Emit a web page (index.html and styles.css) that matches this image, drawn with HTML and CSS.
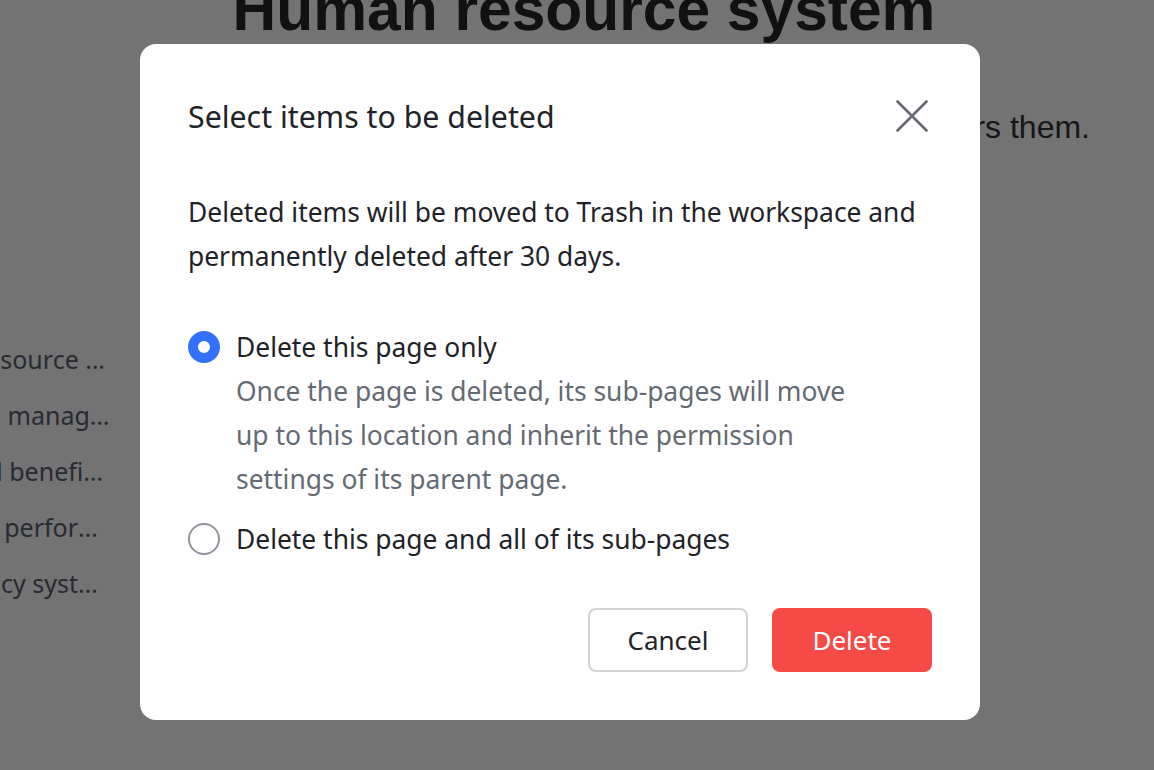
FILE: index.html
```html
<!DOCTYPE html>
<html lang="en">
<head>
<meta charset="utf-8">
<title>Human resource system</title>
<link rel="stylesheet" href="styles.css">
</head>
<body>
<div class="page">
  <aside class="sidebar">
    <ul class="nav">
      <li>Human resource management</li>
      <li>Personnel management</li>
      <li>Additional benefits plan</li>
      <li>Employee performance</li>
      <li>Leave policy system</li>
    </ul>
  </aside>
  <main class="content">
    <h1 class="doc-title">Human resource system</h1>
    <p class="doc-lead">Introduces the HR systems and how HR administers them.</p>
  </main>
</div>

<div class="overlay"></div>

<div class="modal" role="dialog" aria-labelledby="modal-title">
  <header class="modal-header">
    <h2 id="modal-title" class="modal-title">Select items to be deleted</h2>
    <button class="close-btn" aria-label="Close">
      <svg width="32" height="32" viewBox="0 0 32 32"><path d="M1.5 1.5 L30.5 30.5 M30.5 1.5 L1.5 30.5" stroke="#646a73" stroke-width="2.6" stroke-linecap="round" fill="none"/></svg>
    </button>
  </header>
  <p class="modal-text">Deleted items will be moved to Trash in the workspace and permanently deleted after 30 days.</p>
  <div class="options">
    <label class="option">
      <span class="radio checked"></span>
      <span class="option-body">
        <span class="option-label">Delete this page only</span>
        <span class="option-desc">Once the page is deleted, its sub-pages will move up to this location and inherit the permission settings of its parent page.</span>
      </span>
    </label>
    <label class="option">
      <span class="radio"></span>
      <span class="option-body">
        <span class="option-label">Delete this page and all of its sub-pages</span>
      </span>
    </label>
  </div>
  <footer class="modal-footer">
    <button class="btn btn-cancel">Cancel</button>
    <button class="btn btn-delete">Delete</button>
  </footer>
</div>
</body>
</html>
```

FILE: styles.css
```css
* { box-sizing: border-box; }
html, body { margin: 0; padding: 0; }
body {
  width: 1154px;
  height: 770px;
  overflow: hidden;
  background: #fff;
  font-family: "Noto Sans", "Liberation Sans", sans-serif;
  color: #1f2329;
}
.page {
  display: flex;
  height: 770px;
}
.sidebar {
  width: 120px;
  flex: none;
  overflow: hidden;
}
.nav {
  list-style: none;
  margin: 0 0 0 -117px;
  padding: 331px 0 0 0;
  width: 227px;
}
.nav li {
  font-size: 25px;
  line-height: 56px;
  height: 56px;
  color: #5a6070;
  white-space: nowrap;
  overflow: hidden;
  text-overflow: ellipsis;
}
.content {
  flex: 1;
  padding-left: 20px;
}
.doc-title {
  font-family: "Liberation Sans", Arial, sans-serif;
  font-weight: bold;
  font-size: 60.5px;
  margin: -21px 0 0 0;
  line-height: 60px;
  text-align: center;
  color: #262626;
  width: 888px;
}
.doc-lead {
  font-family: "Liberation Sans", Arial, sans-serif;
  font-size: 32px;
  color: #333;
  margin: 68px 0 0 0;
  line-height: 40px;
  white-space: nowrap;
  text-align: right;
  width: 950px;
}
.overlay {
  position: fixed;
  inset: 0;
  background: rgba(0, 0, 0, 0.55);
}
.modal {
  position: fixed;
  left: 140px;
  top: 44px;
  width: 840px;
  height: 676px;
  background: #fff;
  border-radius: 16px;
  padding: 48px;
  display: flex;
  flex-direction: column;
}
.modal-header {
  display: flex;
  align-items: center;
  justify-content: space-between;
  height: 48px;
}
.modal-title {
  margin: 0;
  font-weight: normal;
  font-size: 30.3px;
  color: #1f2329;
}
.close-btn {
  border: 0;
  background: none;
  padding: 0;
  width: 32px;
  height: 32px;
  margin-right: 4px;
  display: flex;
}
.modal-text {
  margin: 50px 0 0 0;
  font-size: 26.4px;
  line-height: 44px;
  color: #1f2329;
}
.options {
  margin-top: 47px;
  display: flex;
  flex-direction: column;
  gap: 16px;
}
.option {
  display: flex;
  gap: 16px;
}
.radio {
  flex: none;
  width: 32px;
  height: 32px;
  border-radius: 50%;
  border: 2px solid #8f959e;
  margin-top: 6px;
}
.radio.checked {
  border: 10px solid #3370ff;
  background: #fff;
}
.option-body {
  display: flex;
  flex-direction: column;
}
.option-label {
  font-size: 26.4px;
  line-height: 44px;
  color: #1f2329;
}
.option-desc {
  font-size: 26.4px;
  line-height: 44px;
  color: #646a73;
  width: 630px;
}
.modal-footer {
  margin-top: auto;
  display: flex;
  justify-content: flex-end;
  gap: 24px;
}
.btn {
  width: 160px;
  height: 64px;
  border-radius: 8px;
  font-family: "Noto Sans", "Liberation Sans", sans-serif;
  font-size: 26px;
  cursor: pointer;
}
.btn-cancel {
  background: #fff;
  border: 2px solid #d0d3d6;
  color: #1f2329;
}
.btn-delete {
  background: #f54a45;
  border: 0;
  color: #fff;
}
```
